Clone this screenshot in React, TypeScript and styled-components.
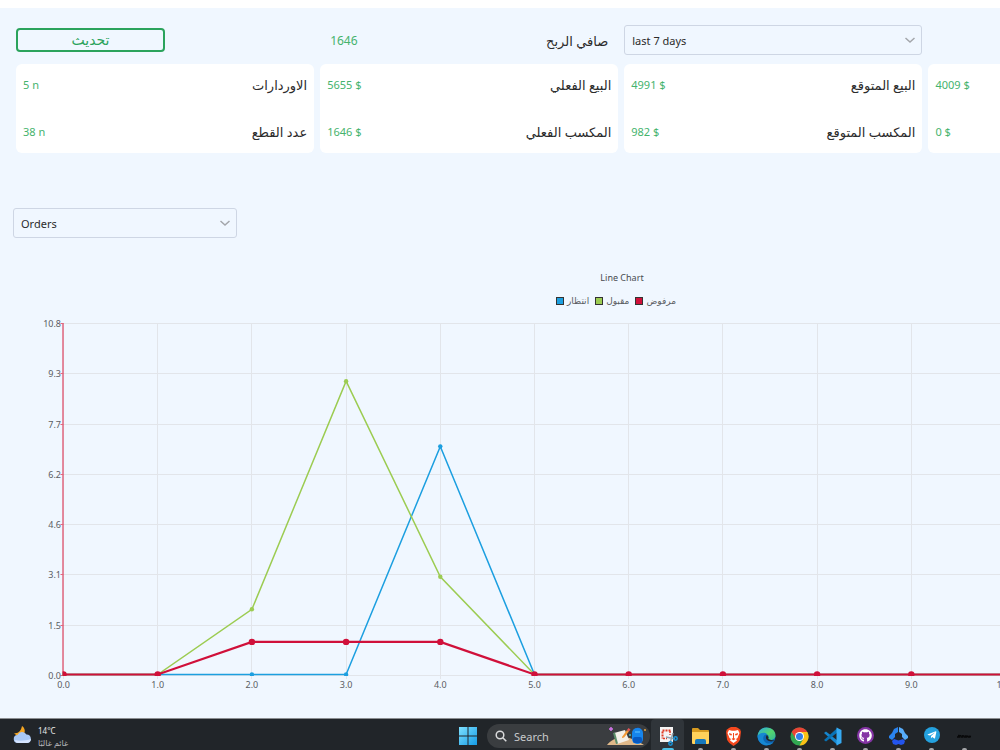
import React from "react";
import styled, { createGlobalStyle } from "styled-components";
import { FaGithub, FaTelegramPlane } from "react-icons/fa";

const GlobalStyle = createGlobalStyle`
  *, *::before, *::after { box-sizing: border-box; }
  body {
    margin: 0;
    background: #fff;
    color: #2b2b2b;
    font-family: "Noto Sans", "DejaVu Sans", sans-serif;
    font-size: 12px;
  }
`;

const Page = styled.div`
  display: flex;
  flex-direction: column;
  min-height: 100vh;
  padding-top: 8px;
  overflow: hidden;
`;

const Main = styled.main`
  flex: 1;
  background: #f0f7ff;
  padding-top: 16px;
`;

const Columns = styled.div`
  display: grid;
  grid-template-columns: repeat(4, 30.3%);
  column-gap: 6px;
  margin-left: 16px;
`;

const Toolbar = styled(Columns)`
  align-items: center;
  height: 32px;
  margin-bottom: 8px;
`;

const RefreshButton = styled.button`
  width: 50%;
  height: 24px;
  padding: 0;
  border: 2px solid #2ba35c;
  border-radius: 4px;
  background: transparent;
  color: #2ba35c;
  font: inherit;
  font-size: 14px;
  line-height: 20px;
`;

const NetProfit = styled.div`
  display: flex;
  justify-content: space-between;
  align-items: center;
  padding: 2px 10px 0;
  line-height: 20px;
`;

const Label = styled.span`
  font-size: 13px;
`;

const Value = styled.span<{ $large?: boolean }>`
  color: #45b36d;
  font-size: ${(p) => (p.$large ? 12 : 11)}px;
`;

const Card = styled.section`
  display: flex;
  flex-direction: column;
  justify-content: space-between;
  height: 89px;
  padding: 10px 7px;
  border-radius: 6px;
  background: #fff;
`;

const Stat = styled.div`
  display: flex;
  justify-content: space-between;
  align-items: center;
  height: 22px;
  line-height: 22px;
`;

const SelectBox = styled.div<{ $narrow?: boolean }>`
  display: grid;
  align-items: center;
  width: ${(p) => (p.$narrow ? "22.4%" : "100%")};
  margin: ${(p) => (p.$narrow ? "55px 0 0 13px" : "0")};

  > * { grid-area: 1 / 1; }
  > svg {
    justify-self: end;
    margin-right: 6px;
    pointer-events: none;
  }
`;

const Select = styled.select`
  appearance: none;
  width: 100%;
  height: 30px;
  padding: 0 24px 0 7px;
  border: 1px solid #ced6e4;
  border-radius: 3px;
  background: transparent;
  color: #2b2b2b;
  font: inherit;
  font-size: 11px;
`;

const ChartPanel = styled.figure`
  width: 124.4%;
  margin: 32px 0 0;
  color: #5a5d62;
  font-size: 9px;
`;

const ChartTitle = styled.figcaption`
  color: #484b50;
  line-height: 16px;
  text-align: center;
`;

const Legend = styled.ul`
  display: flex;
  justify-content: center;
  gap: 6px;
  margin: 7px 0 0;
  padding: 0 12px 0 0;
  list-style: none;
  line-height: 16px;
`;

const LegendItem = styled.li`
  display: flex;
  align-items: center;
  gap: 3px;
`;

const Swatch = styled.span<{ $color: string }>`
  width: 8px;
  height: 8px;
  border: 1px solid #333;
  background: ${(p) => p.$color};
`;

const Plot = styled.svg`
  display: block;
  width: 100%;
  margin-top: 7px;
  font-family: "Noto Sans", sans-serif;
`;

const Taskbar = styled.footer`
  display: flex;
  height: 32px;
  border-top: 1px solid #8b8e91;
  background: #212529;
  color: #e8e8e8;
  overflow: hidden;
`;

const Weather = styled.div`
  display: flex;
  flex: 0 0 45.1%;
  gap: 6px;
  padding: 6px 0 0 13px;
  font-size: 8px;
  line-height: 12px;
`;

const WeatherText = styled.div`
  display: flex;
  flex-direction: column;
`;

const Dim = styled.span`
  color: #b5b7ba;
`;

const TaskButton = styled.button<{ $active?: boolean; $running?: boolean }>`
  display: flex;
  flex: 0 0 33px;
  flex-direction: column;
  align-items: center;
  justify-content: space-between;
  height: 31px;
  padding: 8px 0 0;
  border: 0;
  border-radius: 4px 4px 0 0;
  background: ${(p) => (p.$active ? "#30353a" : "transparent")};
  color: #fff;

  &::after {
    content: "";
    width: ${(p) => (p.$active ? 12 : 5)}px;
    height: 2px;
    border-radius: 2px 2px 0 0;
    background: ${(p) => (p.$active ? "#4cc2e8" : p.$running ? "#a4a6a8" : "transparent")};
  }
`;

const SearchBox = styled.label`
  display: flex;
  align-items: center;
  flex: 0 0 163px;
  min-width: 0;
  height: 24px;
  margin: 5px 1px 0 3px;
  padding: 0 3px 0 8px;
  border-radius: 12px;
  background: #3a3d40;

  > svg { flex-shrink: 0; }
`;

const SearchInput = styled.input`
  flex: 1;
  width: 0;
  min-width: 0;
  padding: 0 7px;
  border: 0;
  background: transparent;
  color: #c8cacc;
  font: inherit;
  font-size: 11px;

  &::placeholder { color: #c8cacc; opacity: 1; }
`;

const GithubDisc = styled.span`
  display: flex;
  align-items: center;
  justify-content: center;
  width: 17px;
  height: 17px;
  border-radius: 50%;
  background: #8534a5;
`;

const TelegramDisc = styled(GithubDisc)`
  width: 16px;
  height: 16px;
  background: #24a1de;
`;

const Chevron = () => (
  <svg width="12" height="12" viewBox="0 0 12 12" fill="none" stroke="#a3a6ab" strokeWidth="1.5">
    <path d="M1.5 4 6 8l4.500-4" />
  </svg>
);

const cards = [
  [["5 n", "الاوردارات"], ["38 n", "عدد القطع"]],
  [["5655 $", "البيع الفعلي"], ["1646 $", "المكسب الفعلي"]],
  [["4991 $", "البيع المتوقع"], ["982 $", "المكسب المتوقع"]],
  [["4009 $", ""], ["0 $", ""]],
];

const series = [
  { name: "انتظار", color: "#1c9fe0", width: 1.5, radius: 2.2, data: [0, 0, 0, 0, 7, 0, 0, 0, 0, 0, 0] },
  { name: "مقبول", color: "#9ccc52", width: 1.5, radius: 2.2, data: [0, 0, 2, 9, 3, 0, 0, 0, 0, 0, 0] },
  { name: "مرفوض", color: "#d0103a", width: 2.2, radius: 3.2, data: [0, 0, 1, 1, 1, 0, 0, 0, 0, 0, 0] },
];

const yTicks = ["10.8", "9.3", "7.7", "6.2", "4.6", "3.1", "1.5", "0.0"];
const LEFT = 63.5;
const TOP = 7;
const BASE = 359;
const STEP = 94.2;
const xAt = (i: number) => LEFT + i * STEP;
const yAt = (v: number) => BASE - (v * (BASE - TOP)) / 10.8;

function LineChart() {
  return (
    <Plot viewBox="0 0 1244 378" role="img" aria-label="Line Chart">
      <defs>
        <clipPath id="plot">
          <rect x={LEFT - 1} y={0} width={1200} height={BASE + 1} />
        </clipPath>
      </defs>
      <g stroke="#e2e5ea" strokeWidth="1">
        {yTicks.map((t, i) => {
          const y = Math.round(TOP + (i * (BASE - TOP)) / 7) + 0.5;
          return <line key={t} x1={LEFT} x2={1240} y1={y} y2={y} />;
        })}
        {series[0].data.map((_, i) => {
          const x = Math.floor(xAt(i)) + 0.5;
          return <line key={i} x1={x} x2={x} y1={TOP} y2={BASE + 4} />;
        })}
      </g>
      <g stroke="#e0667f" strokeWidth="1">
        <line x1={LEFT - 0.5} x2={LEFT - 0.5} y1={TOP} y2={BASE} strokeWidth="1.5" />
        {yTicks.map((t, i) => {
          const y = Math.round(TOP + (i * (BASE - TOP)) / 7) + 0.5;
          return <line key={t} x1={LEFT - 3} x2={LEFT} y1={y} y2={y} />;
        })}
      </g>
      <g fill="#5a5d62" fontSize="9">
        {yTicks.map((t, i) => (
          <text key={t} x={61} y={TOP + (i * (BASE - TOP)) / 7 + 4} textAnchor="end">{t}</text>
        ))}
        {series[0].data.map((_, i) => (
          <text key={i} x={xAt(i)} y={BASE + 13} textAnchor="middle">{i.toFixed(1)}</text>
        ))}
      </g>
      <g clipPath="url(#plot)">
        {series.map((s) => (
          <g key={s.name} fill={s.color}>
            <polyline
              fill="none"
              stroke={s.color}
              strokeWidth={s.width}
              points={s.data.map((v, i) => `${xAt(i)},${yAt(v) - 0.5}`).join(" ")}
            />
            {s.data.map((v, i) => (
              <circle key={i} cx={xAt(i)} cy={yAt(v) - 0.5} r={s.radius} />
            ))}
          </g>
        ))}
      </g>
    </Plot>
  );
}

const WeatherIcon = () => (
  <svg width="19" height="19" viewBox="0 0 19 19">
    <path d="M9 1c3 2 4 6 1 9-3 2-7 1-9-2 4 1 7-2 8-7Z" fill="#f5a623" />
    <path d="M5 18a4 4 0 0 1-.5-8 5 5 0 0 1 9-.5A4.300 4.300 0 0 1 14.500 18Z" fill="#a9c8f5" />
    <path d="M2 15c4 1 10 1 16-1-.5 3-2 4-4 4H5c-1.500 0-3-1-3-3Z" fill="#d6e5ff" />
  </svg>
);

const WindowsIcon = () => (
  <svg width="18" height="18" viewBox="0 0 18 18">
    <defs>
      <linearGradient id="win" x2="1" y2="1" gradientUnits="objectBoundingBox">
        <stop stopColor="#7ee0ff" />
        <stop offset="1" stopColor="#159be5" />
      </linearGradient>
    </defs>
    <path d="M0 0h8.500v8.500H0ZM9.500 0H18v8.500H9.500ZM0 9.500h8.500V18H0ZM9.500 9.500H18V18H9.500Z" fill="url(#win)" />
  </svg>
);

const SearchIcon = () => (
  <svg width="12" height="12" viewBox="0 0 12 12" fill="none" stroke="#dadbdc" strokeWidth="1.5">
    <circle cx="5" cy="5" r="3.800" />
    <path d="m7.800 7.800 3.500 3.500" />
  </svg>
);

const SearchArt = () => (
  <svg width="40" height="20" viewBox="0 0 40 20">
    <path d="M0 19c3-4 9-8 17-8 8 1 14 4 20 8Z" fill="#dfb98a" />
    <path d="m7 7 11-3 4 10-12 4Z" fill="#f3f0e9" />
    <path d="m6 7 3 11 2-.5L8 6.500Z" fill="#5b8d69" />
    <path d="m15 11 5-7 2 1.500-5 6-2 .5Z" fill="#f29a38" />
    <path d="m20 4 1.500-2 2 1.500L22 5.500Z" fill="#e45656" />
    <path d="M28 3q3-3 6 0v2h-6Z" fill="#154eb5" />
    <rect x="25" y="2" width="11" height="16" rx="5" fill="#1685ed" />
    <rect x="26" y="11" width="9" height="6" rx="2" fill="#0759c2" />
    <path d="M28 6h5" stroke="#62c7ff" />
    <path d="M4 1v4M2 3h4" stroke="#d375e9" strokeWidth="1.500" />
    <circle cx="38" cy="4" r="1" fill="#eaa63c" />
    <circle cx="23" cy="9" r="1" fill="#41c5cf" />
  </svg>
);

const SnipIcon = () => (
  <svg width="20" height="19" viewBox="0 0 20 19">
    <path d="M2 0h13v15H2Z" fill="#f4f4f4" />
    <path d="M12.500 3.500h-8v8" fill="none" stroke="#df3c24" strokeWidth="2" strokeDasharray="2 1" />
    <path d="M12 4v4M5 11.500h4" fill="none" stroke="#df3c24" strokeWidth="1.500" strokeDasharray="2 1" />
    <path d="m8 10 9 2M15 6l-3 10" stroke="#8fa1ab" strokeWidth="1.500" />
    <g fill="none" stroke="#1692d8" strokeWidth="1.500">
      <circle cx="17.500" cy="11.500" r="1.700" />
      <circle cx="12.500" cy="16.500" r="1.700" />
    </g>
  </svg>
);

const FolderIcon = () => (
  <svg width="19" height="18" viewBox="0 0 19 18">
    <path d="M1 2q0-1 1-1h5l2 2h8q1 0 1 1v12H1Z" fill="#d89b20" />
    <path d="M1 5h17v11q0 1-1 1H2q-1 0-1-1Z" fill="#ffd15b" />
    <path d="M4 17v-3q0-2 2-2h7q2 0 2 2v3Z" fill="#1679bd" />
  </svg>
);

const BraveIcon = () => (
  <svg width="17" height="19" viewBox="0 0 17 19">
    <path d="m4 1 2-1h5l2 1 2 1.500 1 2-1 8q-1 3-6.500 6.500Q3 15.500 2 12.500l-1-8 1-2Z" fill="#f5481e" />
    <path d="m4 3 3 .8h3l3-.8 1.500 3-2 5-1.500 1 1 1.500-3.500 2.500L5 13.500 6 12l-1.500-1-2-5Z" fill="#fff" />
    <path d="m4 6 3 1-.5 1.500L4.500 8Zm9 0-3 1 .5 1.500 2-.5ZM8 6h1v5l1.500 1-2 1.200-2-1.200L8 11Z" fill="#f5481e" />
  </svg>
);

const EdgeIcon = () => (
  <svg width="19" height="19" viewBox="0 0 19 19">
    <defs>
      <linearGradient id="edge" x2="1" y2="1">
        <stop stopColor="#2ba8e7" />
        <stop offset=".55" stopColor="#54d66e" />
        <stop offset="1" stopColor="#35b795" />
      </linearGradient>
    </defs>
    <circle cx="9.500" cy="9.500" r="9" fill="#0e66b4" />
    <path d="M.5 9C1.500 3 5 .5 9.500.5c6 0 9 4 9 8 0 3-2.500 4.500-5 4.500-2 0-3-1-2-2 1-2-1-4-3.500-4C4.500 7 2 7.500.5 9Z" fill="url(#edge)" />
    <path d="M.5 9C3 5 8 5 10 7c-4 1-5 5-2 8 2 2 5 2 8.500.5C11 21 1 18 .5 9Z" fill="#1688d2" />
    <path d="M10 8c-2 2-1 5 2 6 2 .8 4 .5 6-1-2 .5-8 0-6.500-2.500Z" fill="#212529" />
  </svg>
);

const ChromeIcon = () => (
  <svg width="19" height="19" viewBox="0 0 20 20">
    <circle cx="10" cy="10" r="9.500" fill="#32a852" />
    <path d="M1.770 5.250A9.500 9.500 0 0 1 18.230 5.250L10 5.500 5.900 12.400Z" fill="#e94335" />
    <path d="M18.230 5.250A9.500 9.500 0 0 1 10 19.500l4.100-7.100L10 5.250Z" fill="#fbc116" />
    <circle cx="10" cy="10" r="4.700" fill="#fff" />
    <circle cx="10" cy="10" r="3.700" fill="#327fe8" />
  </svg>
);

const CodeIcon = () => (
  <svg width="19" height="19" viewBox="0 0 19 19">
    <path d="m1 6 2-1.500L15 14v4.500Z" fill="#1686ce" />
    <path d="m1 13 2 1.500L15 5V.5Z" fill="#0873b7" />
    <path d="m13.500.5 5 2.500v13l-5 2.500Z" fill="#36aaf2" />
  </svg>
);

const HexIcon = () => (
  <svg width="19" height="19" viewBox="0 0 19 19">
    <path d="m5 2 4-2v5L6 7v3l-3 3-3-2V9l3-3Z" fill="#2a83ee" />
    <path d="m10 0 4 2 2 4 3 3v2l-3 2-3-3V7l-3-2Z" fill="#57adfa" />
    <path d="m5 12 4.500 1.500L14 12l2 2-1 3-3 1-2.500-1L7 18l-3-1-1-3Z" fill="#2354ed" />
  </svg>
);

const WordmarkIcon = () => (
  <svg width="17" height="18" viewBox="0 0 17 18">
    <path d="M1 10h14M2 8.500l13 1" stroke="#08090a" strokeWidth="1.500" strokeDasharray="3 .5" />
  </svg>
);

const apps = [
  { name: "Snipping Tool", icon: <SnipIcon />, active: true },
  { name: "File Explorer", icon: <FolderIcon /> },
  { name: "Brave", icon: <BraveIcon /> },
  { name: "Edge", icon: <EdgeIcon /> },
  { name: "Chrome", icon: <ChromeIcon /> },
  { name: "Visual Studio Code", icon: <CodeIcon /> },
  { name: "GitHub Desktop", icon: <GithubDisc><FaGithub size={13} /></GithubDisc> },
  { name: "Workspace", icon: <HexIcon /> },
  { name: "Telegram", icon: <TelegramDisc><FaTelegramPlane size={10} /></TelegramDisc> },
  { name: "Player", icon: <WordmarkIcon /> },
];

export default function App() {
  return (
    <Page>
      <GlobalStyle />
      <Main>
        <Toolbar>
          <RefreshButton type="button" lang="ar">تحديث</RefreshButton>
          <NetProfit>
            <Value $large>1646</Value>
            <Label dir="rtl" lang="ar">صافي الربح</Label>
          </NetProfit>
          <SelectBox>
            <Select aria-label="Period" defaultValue="7">
              <option value="7">last 7 days</option>
            </Select>
            <Chevron />
          </SelectBox>
        </Toolbar>
        <Columns>
          {cards.map((rows, i) => (
            <Card key={i}>
              {rows.map(([value, label]) => (
                <Stat key={value}>
                  <Value>{value}</Value>
                  {label && <Label dir="rtl" lang="ar">{label}</Label>}
                </Stat>
              ))}
            </Card>
          ))}
        </Columns>
        <SelectBox $narrow>
          <Select aria-label="Chart data" defaultValue="orders">
            <option value="orders">Orders</option>
          </Select>
          <Chevron />
        </SelectBox>
        <ChartPanel>
          <ChartTitle>Line Chart</ChartTitle>
          <Legend>
            {series.map((s) => (
              <LegendItem key={s.name}>
                <Swatch $color={s.color} />
                <span dir="rtl" lang="ar">{s.name}</span>
              </LegendItem>
            ))}
          </Legend>
          <LineChart />
        </ChartPanel>
      </Main>
      <Taskbar>
        <Weather>
          <WeatherIcon />
          <WeatherText>
            <span>14°C</span>
            <Dim dir="rtl" lang="ar">غائم غالبًا</Dim>
          </WeatherText>
        </Weather>
        <TaskButton type="button" aria-label="Start"><WindowsIcon /></TaskButton>
        <SearchBox>
          <SearchIcon />
          <SearchInput type="text" placeholder="Search" aria-label="Search" />
          <SearchArt />
        </SearchBox>
        {apps.map((app) => (
          <TaskButton key={app.name} type="button" aria-label={app.name} $active={app.active} $running>
            {app.icon}
          </TaskButton>
        ))}
      </Taskbar>
    </Page>
  );
}
